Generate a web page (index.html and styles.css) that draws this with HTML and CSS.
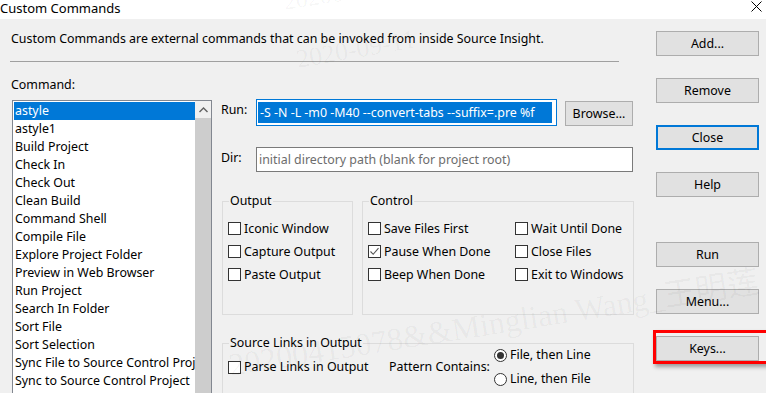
FILE: index.html
```html
<!DOCTYPE html>
<html lang="en">
<head>
  <meta charset="UTF-8" />
  <title>Custom Commands</title>
  <link rel="stylesheet" href="styles.css">
</head>
<body>
  <div class="titlebar">
    <span class="title">Custom Commands</span>
    <svg class="close-x" width="11" height="11" viewBox="0 0 11 11">
      <path d="M0.5 0.5 L10.5 10.5 M10.5 0.5 L0.5 10.5" stroke="#000" stroke-width="1"/>
    </svg>
  </div>

  <div class="dialog">
    <div class="main">
      <p class="desc">Custom Commands are external commands that can be invoked from inside Source Insight.</p>
      <div class="sep"></div>
      <p class="cmd-label">Command:</p>

      <div class="content">
        <div class="listbox">
          <ul class="items">
            <li class="selected">astyle</li>
            <li>astyle1</li>
            <li>Build Project</li>
            <li>Check In</li>
            <li>Check Out</li>
            <li>Clean Build</li>
            <li>Command Shell</li>
            <li>Compile File</li>
            <li>Explore Project Folder</li>
            <li>Preview in Web Browser</li>
            <li>Run Project</li>
            <li>Search In Folder</li>
            <li>Sort File</li>
            <li>Sort Selection</li>
            <li>Sync File to Source Control Project</li>
            <li>Sync to Source Control Project</li>
          </ul>
          <div class="scrollbar">
            <div class="arrow">
              <svg width="9" height="6" viewBox="0 0 9 6"><path d="M0.5 5 L4.5 1 L8.5 5" fill="none" stroke="#606060" stroke-width="1.4"/></svg>
            </div>
            <div class="thumb"></div>
          </div>
        </div>

        <div class="panel">
          <div class="row run-row">
            <label class="field-label">Run:</label>
            <div class="input focused"><span class="sel">-S -N -L -m0 -M40 --convert-tabs --suffix=.pre %f</span></div>
            <button class="btn browse">Browse...</button>
          </div>
          <div class="row dir-row">
            <label class="field-label">Dir:</label>
            <div class="input dir"><span class="placeholder">initial directory path (blank for project root)</span></div>
          </div>

          <div class="groups">
            <fieldset class="group output">
              <legend>Output</legend>
              <div class="checks">
                <div class="check"><span class="cb"></span>Iconic Window</div>
                <div class="check"><span class="cb"></span>Capture Output</div>
                <div class="check"><span class="cb"></span>Paste Output</div>
              </div>
            </fieldset>
            <fieldset class="group control">
              <legend>Control</legend>
              <div class="checks grid2">
                <div class="check"><span class="cb"></span>Save Files First</div>
                <div class="check"><span class="cb"></span>Wait Until Done</div>
                <div class="check"><span class="cb"><svg width="11" height="11" viewBox="0 0 11 11"><path d="M1.5 5.5 L4.2 8.3 L9.5 2.2" fill="none" stroke="#555" stroke-width="1.1"/></svg></span>Pause When Done</div>
                <div class="check"><span class="cb"></span>Close Files</div>
                <div class="check"><span class="cb"></span>Beep When Done</div>
                <div class="check"><span class="cb"></span>Exit to Windows</div>
              </div>
            </fieldset>
          </div>

          <fieldset class="group links">
            <legend>Source Links in Output</legend>
            <div class="links-row">
              <div class="check parse"><span class="cb"></span>Parse Links in Output</div>
              <span class="pattern">Pattern Contains:</span>
              <div class="radios">
                <div class="radio"><span class="rb on"></span>File, then Line</div>
                <div class="radio"><span class="rb"></span>Line, then File</div>
              </div>
            </div>
          </fieldset>
        </div>
      </div>
    </div>

    <div class="side">
      <button class="btn side-btn">Add...</button>
      <button class="btn side-btn">Remove</button>
      <button class="btn side-btn default">Close</button>
      <button class="btn side-btn">Help</button>
      <button class="btn side-btn far">Run</button>
      <button class="btn side-btn">Menu...</button>
      <button class="btn side-btn">Keys...</button>
    </div>
  </div>

  <div class="highlight-box"></div>

  <span class="watermark wm1">20200415078</span>
  <span class="watermark wm2">2020-09-11</span>
  <span class="watermark wm3">20200415078&amp;&amp;Minglian Wang_王明莲</span>
</body>
</html>
```

FILE: styles.css
```css
body {
  margin: 0;
  width: 766px;
  height: 393px;
  overflow: hidden;
  position: relative;
  background: #f0f0f0;
  color: #000;
  font-family: "Noto Sans", "Noto Sans CJK SC", sans-serif;
  font-size: 12.4px;
  line-height: 16px;
}
p {
  margin: 0;
}
.titlebar {
  height: 19px;
  background: #fff;
  display: flex;
  justify-content: space-between;
  align-items: center;
}
.title {
  font-size: 13px;
  margin-top: -4px;
}
.close-x {
  margin-right: 4px;
  margin-top: -6px;
}
.dialog {
  display: flex;
  height: 374px;
  overflow: hidden;
}
.main {
  width: 645px;
  padding-left: 11px;
  box-sizing: border-box;
}
.desc {
  margin-top: 12px;
}
.sep {
  margin: 14px 0 0 -1px;
  width: 609px;
  height: 1px;
  background: #a0a0a0;
}
.cmd-label {
  margin-top: 15px;
}
.content {
  display: flex;
  align-items: flex-start;
  margin-top: 7px;
}

/* command list */
.listbox {
  margin-left: 1px;
  width: 200px;
  height: 300px;
  box-sizing: border-box;
  border: 1px solid #828790;
  background: #fff;
  display: flex;
  padding: 1px 0 0 1px;
}
.items {
  list-style: none;
  margin: 0;
  padding: 0;
  width: 181px;
  overflow: hidden;
}
.items li {
  height: 18px;
  line-height: 18px;
  padding-left: 1px;
  white-space: nowrap;
  overflow: hidden;
}
.items li.selected {
  background: #0078d7;
  color: #fff;
}
.scrollbar {
  width: 16px;
  margin-top: -1px;
  display: flex;
  flex-direction: column;
  background: #f0f0f0;
}
.arrow {
  height: 17px;
  display: flex;
  align-items: center;
  justify-content: center;
}
.thumb {
  flex: 1;
  background: #cdcdcd;
}

/* right panel */
.panel {
  margin-left: 9px;
  margin-top: -1px;
  width: 413px;
}
.row {
  display: flex;
  align-items: flex-start;
}
.field-label {
  width: 35px;
  padding-top: 3px;
}
.input {
  box-sizing: border-box;
  background: #fff;
  border: 1px solid #7a7a7a;
  overflow: hidden;
  white-space: nowrap;
}
.input.focused {
  width: 301px;
  height: 27px;
  border-color: #0078d7;
  padding: 2px 4px 2px 1px;
}
.sel {
  display: block;
  height: 21px;
  line-height: 21px;
  background: #0078d7;
  color: #fff;
  padding-left: 2px;
  overflow: hidden;
}
.input.dir {
  width: 377px;
  height: 25px;
  line-height: 23px;
  padding-left: 2px;
}
.placeholder {
  color: #6d6d6d;
}
.dir-row {
  margin-top: 21px;
}
.btn {
  font-family: inherit;
  font-size: 12.4px;
  color: #000;
  background: #e1e1e1;
  border: 1px solid #adadad;
  height: 25px;
  padding: 0;
  box-sizing: border-box;
}
.browse {
  width: 68px;
  margin: 2px 0 0 8px;
}

/* group boxes */
.groups {
  display: flex;
  margin-top: 21px;
  margin-left: 1px;
}
.group {
  margin: 0;
  padding: 0 5px;
  border: 1px solid #dcdcdc;
  box-sizing: border-box;
  min-width: 0;
}
.group legend {
  padding: 0 1px;
  margin-left: 1px;
  line-height: 16px;
}
.output {
  width: 131px;
  height: 122px;
}
.control {
  width: 272px;
  height: 122px;
  margin-left: 9px;
}
.checks {
  padding-top: 8px;
}
.grid2 {
  display: grid;
  grid-template-columns: 147px auto;
}
.check,
.radio {
  display: flex;
  align-items: center;
  height: 23px;
  white-space: nowrap;
}
.cb {
  width: 13px;
  height: 13px;
  box-sizing: border-box;
  border: 1px solid #333;
  background: #fff;
  margin-right: 3px;
  display: flex;
  align-items: center;
  justify-content: center;
}
.links {
  margin: 20px 0 0 1px;
  width: 412px;
  height: 70px;
}
.links-row {
  display: flex;
  align-items: center;
  margin-top: -8px;
}
.parse {
  width: 161px;
}
.pattern {
  width: 105px;
}
.radio {
  height: 24px;
}
.rb {
  width: 13px;
  height: 13px;
  box-sizing: border-box;
  border: 1px solid #333;
  border-radius: 50%;
  background: #fff;
  margin-right: 3px;
  display: flex;
  align-items: center;
  justify-content: center;
}
.rb.on::after {
  content: "";
  width: 7px;
  height: 7px;
  border-radius: 50%;
  background: #333;
}

/* command buttons */
.side {
  display: flex;
  flex-direction: column;
  padding-top: 12px;
  margin-left: 11px;
}
.side-btn {
  width: 103px;
  margin-bottom: 22px;
}
.side-btn.default {
  border: 2px solid #0078d7;
}
.side-btn.far {
  margin-top: 23px;
}

/* annotation + watermark overlays */
.highlight-box {
  position: absolute;
  left: 653px;
  top: 330px;
  width: 125px;
  height: 34px;
  box-sizing: border-box;
  border: 3px solid #f00;
  box-shadow: 2px 3px 4px rgba(0, 0, 0, 0.35);
}
.watermark {
  position: absolute;
  font-family: "Liberation Serif", "Noto Sans CJK SC", serif;
  color: rgba(0, 0, 0, 0.045);
  white-space: nowrap;
  transform-origin: left bottom;
  pointer-events: none;
}
.wm1 {
  left: 285px;
  top: -6px;
  font-size: 24px;
  transform: rotate(-9deg);
}
.wm2 {
  left: 298px;
  top: 52px;
  font-size: 26px;
  transform: rotate(-10deg);
}
.wm3 {
  left: 230px;
  top: 357px;
  font-size: 32px;
  transform: rotate(-9deg);
}
```
